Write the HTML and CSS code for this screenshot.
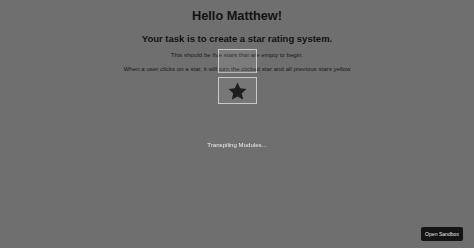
FILE: index.html
```html
<!DOCTYPE html>
<html>
<head>
<meta charset="utf-8">
<link rel="stylesheet" href="styles.css">
</head>
<body>
<main class="page">
  <h1 class="title">Hello Matthew!</h1>
  <h2 class="subtitle">Your task is to create a star rating system.</h2>
  <p class="line line-first">This should be five stars that are empty to begin.</p>
  <p class="line line-second">When a user clicks on a star, it will turn the clicked star and all previous stars yellow</p>
</main>
<div class="overlay">
  <div class="star-box">
    <div class="star-box-top"></div>
    <div class="star-box-bottom">
      <svg class="star" viewBox="0 0 24 24" width="21" height="21"><path d="M12 1.8l3.1 6.6 7.2.8-5.4 4.9 1.5 7.1L12 17.6l-6.4 3.6 1.5-7.1-5.4-4.9 7.2-.8z" fill="#1e1e1e"/></svg>
    </div>
  </div>
  <div class="status">Transpiling Modules...</div>
  <button class="open-btn">Open Sandbox</button>
</div>
</body>
</html>
```
FILE: styles.css
```css
html, body {
  margin: 0;
  padding: 0;
}
body {
  width: 474px;
  height: 248px;
  background: #6f6f6f;
  font-family: "Liberation Sans", Arial, sans-serif;
  overflow: hidden;
}
.page {
  display: flex;
  flex-direction: column;
  align-items: center;
  text-align: center;
  color: #121212;
  padding-top: 7.5px;
}
.title {
  margin: 0;
  font-size: 12.75px;
  line-height: 15px;
  font-weight: bold;
}
.subtitle {
  margin: 10px 0 0;
  font-size: 9.5px;
  line-height: 11px;
  font-weight: bold;
}
.line {
  margin: 0;
  font-size: 6.15px;
  line-height: 8px;
  color: #1a1a1a;
}
.line-first { margin-top: 7.5px; }
.line-second { margin-top: 6px; }
.overlay {
  position: fixed;
  inset: 0;
  display: flex;
  flex-direction: column;
  align-items: center;
  padding-top: 49px;
}
.star-box {
  width: 39px;
  height: 55px;
  display: flex;
  flex-direction: column;
  gap: 4px;
  margin-left: 1px;
}
.star-box-top {
  height: 22px;
  border: 1px solid rgba(255, 255, 255, 0.6);
  border-bottom-color: rgba(255, 255, 255, 0.45);
  background: rgba(255, 255, 255, 0.09);
}
.star-box-bottom {
  flex: 1;
  display: flex;
  align-items: center;
  justify-content: center;
  border: 1px solid rgba(255, 255, 255, 0.6);
  background: rgba(255, 255, 255, 0.06);
}
.star {
  display: block;
  margin-top: 1px;
}
.status {
  margin-top: 37px;
  font-size: 6.1px;
  line-height: 8px;
  color: #ececec;
}
.open-btn {
  position: absolute;
  right: 11px;
  bottom: 7px;
  height: 14px;
  padding: 0 4px;
  border: 0;
  border-radius: 2px;
  background: #141414;
  color: #e8e8e8;
  font-family: "Liberation Sans", Arial, sans-serif;
  font-size: 5.1px;
  line-height: 14px;
}
```
